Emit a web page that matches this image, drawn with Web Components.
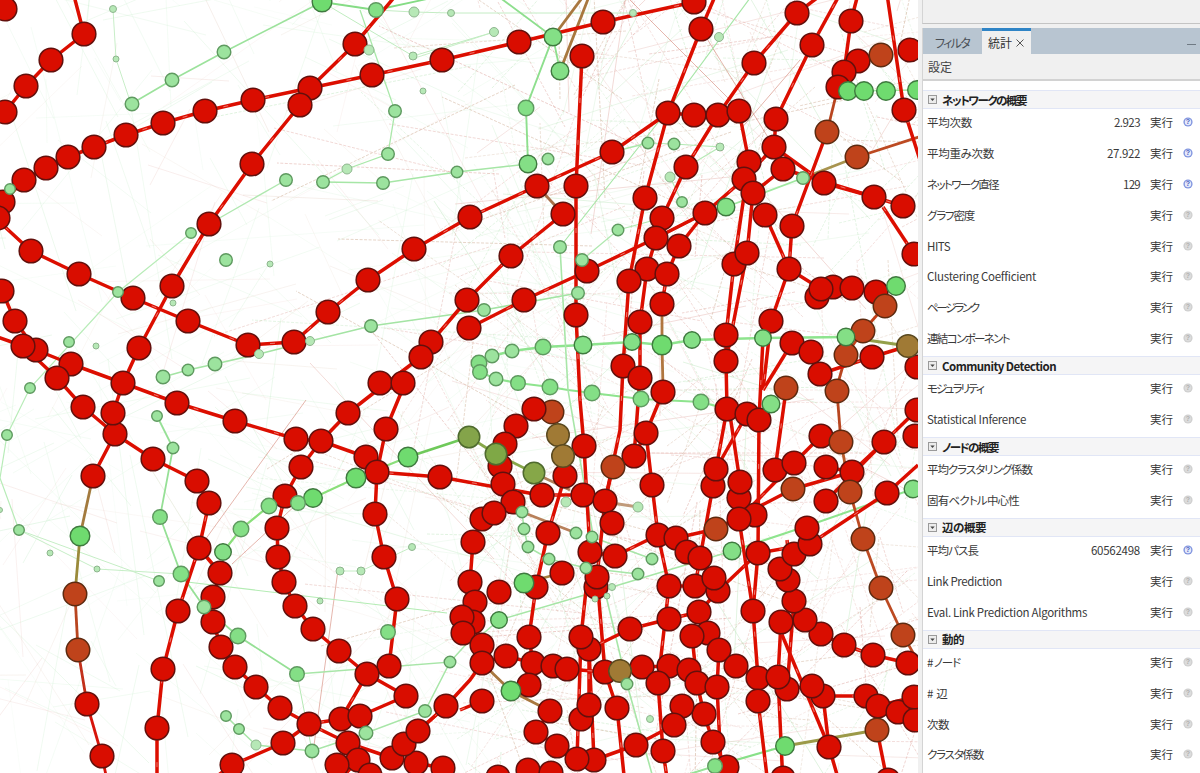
<!DOCTYPE html>
<html lang="ja"><head><meta charset="utf-8"><title>統計</title>
<style>html,body{margin:0;padding:0;background:#fff;overflow:hidden}
gephi-app{font-family:"Noto Sans CJK JP","Noto Sans",sans-serif}</style></head><body>
<gephi-app>
<graph-view slot="graph"></graph-view>
<side-panel slot="panel">
<stat-section title="ネットワークの概要" w="84">
<stat-row label="平均次数" w="45" value="2.923" vw="26" active></stat-row>
<stat-row label="平均重み次数" w="67" value="27.922" vw="33" active></stat-row>
<stat-row label="ネットワーク直径" w="71" value="129" vw="17" active></stat-row>
<stat-row label="グラフ密度" w="47"></stat-row>
<stat-row label="HITS" w="23"></stat-row>
<stat-row label="Clustering Coefficient" w="109"></stat-row>
<stat-row label="ページランク" w="51"></stat-row>
<stat-row label="連結コンポーネント" w="82"></stat-row>
</stat-section>
<stat-section title="Community Detection" w="114">
<stat-row label="モジュラリティ" w="56"></stat-row>
<stat-row label="Statistical Inference" w="99"></stat-row>
</stat-section>
<stat-section title="ノードの概要" w="56">
<stat-row label="平均クラスタリング係数" w="105"></stat-row>
<stat-row label="固有ベクトル中心性" w="92"></stat-row>
</stat-section>
<stat-section title="辺の概要" w="44">
<stat-row label="平均パス長" w="51" value="60562498" vw="49" active></stat-row>
<stat-row label="Link Prediction" w="75"></stat-row>
<stat-row label="Eval. Link Prediction Algorithms" w="160"></stat-row>
</stat-section>
<stat-section title="動的" w="22">
<stat-row label="# ノード" w="33"></stat-row>
<stat-row label="# 辺" w="21"></stat-row>
<stat-row label="次数" w="22"></stat-row>
<stat-row label="クラスタ係数" w="56"></stat-row>
</stat-section>
</side-panel>
</gephi-app>
<script>
function fit(el,w){ if(!w||!el.firstChild)return; el.style.letterSpacing='0px';
 const r=document.createRange();r.selectNodeContents(el);const cur=r.getBoundingClientRect().width;
 const n=el.textContent.length; if(cur>0)el.style.letterSpacing=((+w-cur)/n).toFixed(3)+'px'; }
class GephiApp extends HTMLElement{constructor(){super();this.attachShadow({mode:'open'}).innerHTML=`<style>
:host{display:flex;width:1200px;height:773px;overflow:hidden}
.g{flex:0 0 918px;height:773px;overflow:hidden}
.p{flex:0 0 282px;height:773px;overflow:hidden}
</style><div class="g"><slot name="graph"></slot></div><div class="p"><slot name="panel"></slot></div>`}}

const RED_CHAINS=[
[[73,-8],[84,34],[51,60],[26,86],[5,112],[-8,125]],
[[-5,205],[3,202],[24,180],[46,168],[68,157],[94,147],[126,135],[163,123],[205,111],[253,100],[310,88],[372,75],[442,60],[519,42],[603,22],[694,2],[720,-6]],
[[397,-6],[355,44],[310,88]],
[[300,105],[252,164],[209,224],[172,286],[139,348],[123,383],[113,413],[115,434],[93,476]],
[[5,227],[31,251],[79,274],[133,298],[188,321],[248,345],[294,342],[328,312],[368,280],[414,249],[470,217],[537,186],[612,152],[668,113],[694,115],[718,115],[739,111]],
[[-5,275],[2,291],[15,321],[36,350]],[[-8,335],[23,346],[57,378],[83,407],[115,434],[153,459],[197,481],[209,503],[199,548],[178,611],[163,669],[157,728],[157,785]],
[[36,350],[71,364],[123,383],[177,403],[235,421],[296,439],[321,441],[366,457],[377,472],[440,477],[540,495],[583,495],[605,501]],
[[71,364],[57,378]],
[[321,441],[348,413],[380,388],[421,357],[431,342],[467,300],[511,256],[563,214]],
[[301,467],[321,441]],[[301,467],[285,496],[277,528],[278,557],[284,582],[295,606],[313,629],[339,651],[367,674],[406,696],[360,716],[341,719],[309,724],[280,708],[256,687],[235,667],[221,647],[213,622],[213,597],[220,573],[199,548]],
[[403,388],[386,429],[377,472],[375,514],[384,557],[397,599],[389,666],[367,674],[341,719]],
[[283,743],[232,765],[205,785]],[[283,743],[309,724],[348,743],[392,758],[416,763],[443,768]],
[[418,731],[404,744],[392,758]],[[418,731],[446,706],[470,680],[482,663]],[[404,744],[446,706]],[[348,743],[358,760],[340,780]],[[380,388],[403,388]],
[[469,328],[524,300],[587,271],[656,238],[705,213],[744,179],[774,147]],
[[576,186],[576,315],[580,400],[584,446],[590,552],[581,637],[577,759]],[[582,56],[576,186]],
[[701,29],[668,113],[645,198],[629,281],[623,366],[620,430],[605,501],[597,577]],[[701,29],[716,-6]],
[[718,115],[686,167],[662,218],[647,269],[640,322],[640,378],[634,456]],[[656,238],[662,218]],[[679,246],[705,213]],[[679,246],[667,274],[662,304]],
[[797,13],[754,63],[718,115]],[[797,13],[825,-8]],[[812,45],[776,119],[774,147]],[[812,45],[840,-6]],
[[739,111],[749,162],[734,264],[726,335],[726,361],[727,409],[716,469],[713,486],[695,586]],[[783,169],[753,193],[747,253],[726,361]],
[[774,147],[824,183],[874,197],[903,206]],[[774,147],[783,169],[874,197]],[[883,207],[914,254]],[[887,-6],[904,110],[920,160]],
[[827,132],[792,226],[789,269],[771,321],[763,390]],[[789,269],[821,289],[833,287],[852,288],[876,292]],[[765,215],[789,269]],
[[792,343],[811,352],[820,374],[872,357],[908,346]],[[763,390],[792,343]],[[763,338],[759,420],[758,553],[753,611],[758,678],[758,701],[768,785]],
[[851,21],[844,72],[838,87]],[[851,21],[858,-6]],
[[646,433],[663,392]],[[646,433],[652,485],[658,535],[669,586],[658,683],[663,751],[668,785]],[[634,456],[646,433]],
[[613,467],[605,501],[612,523]],[[565,476],[548,533],[536,587],[529,637],[533,663],[529,685]],
[[473,542],[482,519]],[[473,542],[470,582],[475,602],[473,622]],[[494,513],[513,502]],[[590,552],[615,556],[658,535],[676,538],[716,529],[793,489],[852,472],[884,442],[917,410]],
[[597,577],[605,672],[617,708],[625,785]],[[589,649],[594,760]],[[581,719],[589,705],[589,649],[630,629],[669,619],[699,612],[718,591],[758,553],[810,544],[887,493],[918,465]],
[[482,645],[482,663],[506,656],[533,663],[553,666],[567,669],[605,672],[642,667],[669,666],[689,670],[717,687],[722,785]],
[[460,710],[482,701]],[[550,711],[536,732],[557,746],[577,759],[594,760],[636,745],[674,725],[682,706],[704,714],[713,742],[727,767]],
[[692,636],[697,683],[704,714]],[[708,633],[719,650],[736,666],[758,678]],[[719,650],[717,687]],
[[778,677],[787,689],[812,686],[823,696],[866,696],[878,706],[898,712],[915,720]],[[781,622],[778,677],[783,785]],[[781,622],[805,620],[821,634],[844,645],[873,655],[908,663],[920,666]],
[[823,696],[829,747],[840,785]],[[877,730],[888,785]],[[780,630],[829,747]],[[914,697],[878,706]],
[[794,601],[781,622]],[[794,601],[788,580],[780,569],[794,554],[810,544],[807,528]],[[787,540],[794,601]],[[687,552],[700,558],[718,591]],[[714,578],[695,586],[669,586]],[[687,552],[676,538]],
[[775,470],[786,390]],[[794,463],[739,519]],[[821,436],[794,463]],[[826,467],[852,472]],[[826,501],[884,442]],[[787,689],[794,601]],
[[716,469],[747,414]],[[740,482],[730,415]],[[739,498],[739,519],[753,611]]
];
const THIN_RED=[[[701,29],[774,147]],[[338,570],[312,760]],[[306,400],[205,540]],[[630,0],[740,110]],[[800,60],[740,130]],[[298,503],[232,564]]];
const BROWN=[[[553,37],[585,-6],'#a8783f'],[[560,71],[590,-6],'#a8783f'],[[563,214],[537,186],'#a8704a'],[[662,304],[662,345],'#b0763f'],[[662,345],[663,388],'#b0763f'],[[656,238],[705,213],'#a8723f'],[[93,476],[80,536],'#a37a3e'],[[80,536],[75,594],'#9a8a3a'],[[75,594],[78,650],'#b8451f'],[[78,650],[87,704],'#c2301a'],[[87,704],[102,756],'#d6140a'],[[102,756],[108,785],'#d6140a'],
[[838,87],[827,132],'#b8451f'],[[857,157],[925,135],'#bc4a22'],[[803,178],[857,157],'#a8944f'],[[885,306],[863,331],'#c0401a'],[[863,331],[846,355],'#c0401a'],[[846,337],[908,346],'#93a04a'],[[846,355],[836,390],'#b8451f'],[[837,392],[841,442],'#b8451f'],[[841,442],[850,492],'#b85a2a'],[[850,492],[863,539],'#bc4a22'],[[863,539],[881,588],'#bc4a22'],[[881,588],[903,635],'#bc4a22'],[[903,635],[920,665],'#bc4a22'],[[785,746],[877,730],'#9b9a48'],
[[496,454],[534,473],'#86a748'],[[469,437],[496,454],'#86a748'],[[534,473],[570,490],'#b0805a'],[[482,663],[511,691],'#a8783f'],[[511,691],[550,711],'#a8783f'],[[524,583],[562,573],'#a8803f'],[[612,503],[638,507],'#c09a7a'],[[522,512],[576,533],'#b8805a'],[[408,457],[469,437],'#6fc95a']];
const GREEN_EDGES=[
[[322,2],[224,52],[172,80],[131,104],1.6,'#9ce29c'],[[131,104],[116,59],[113,9],1,'#c8eec8'],[[322,2],[376,10],[450,-6],1.8,'#85dc85'],[[376,10],[414,12],[451,13],[640,13],1,'#c4ecc4'],[[360,10],[395,111],[388,154],[347,169],[323,182],1.3,'#aae8aa'],[[323,182],[383,183],[457,172],[528,164],1.5,'#a6e6a6'],[[286,180],[209,224],1.4,'#b0e8b0'],[[191,233],[118,292],[30,388],[7,435],[0,478],[19,530],1.2,'#b8ecb8'],[[19,530],[159,581],1,'#c6eec6'],[[19,530],[97,569],[181,574],1,'#c6eec6'],
[[157,416],[173,448],[160,517],[181,574],[204,607],[238,636],[297,674],1.8,'#96e096'],[[297,674],[312,751],1,'#b4e8b4'],[[163,377],[188,370],[215,364],[259,354],[310,341],[371,326],[484,310],[578,293],1.7,'#a4e4a4'],[[187,582],[447,613],1.2,'#b4ecb4'],[[297,674],[450,662],[425,711],[366,733],[312,751],[256,745],[239,729],[226,716],1.5,'#a8e6a8'],[[340,571],[361,571],[412,547],1,'#c6eec6'],[[223,552],[241,529],[269,506],[313,498],[356,478],[408,457],2.2,'#8adf7a'],
[[479,363],[492,356],[512,351],[543,347],[583,345],[632,342],[662,345],[692,340],[726,339],[763,338],[846,337],2.4,'#8ee48e'],[[480,372],[496,379],[518,383],[550,387],[568,390],[592,393],[641,399],[701,402],[727,409],2.2,'#8ee48e'],[[560,247],[568,390],[593,535],1.6,'#a8e6a8'],[[592,537],[652,559],1.6,'#a8e6a8'],[[586,568],[638,574],1.6,'#a8e6a8'],[[522,512],[524,529],[528,547],[549,559],[586,568],1.6,'#a8e6a8'],[[470,645],[499,620],[612,587],[732,551],1.5,'#a6e6a6'],[[732,551],[810,525],[913,489],2,'#8ee48e'],[[726,207],[803,178],1.8,'#a0e8a0'],[[648,143],[674,144],[720,147],[670,177],[682,202],1.2,'#b6eab6'],[[612,152],[648,143],1.3,'#aae8aa'],[[618,230],[662,218],1.2,'#b0e8b0'],[[618,230],[582,260],1.3,'#b0e8b0'],[[560,247],[660,120],[753,-6],1.2,'#a8e6a8'],[[528,164],[526,108],[553,37],[495,-6],1.9,'#8edf8e'],[[553,37],[560,71],1.8,'#8edf8e'],[[494,32],[415,58],1,'#c8eec8'],[[322,2],[413,56],[494,32],1,'#c0ecc0'],[[592,537],[627,684],[655,785],1.6,'#a8e6a8'],[[715,766],[785,746],2.2,'#88e088'],[[655,785],[715,766],2,'#98e298'],[[848,91],[917,90],1.6,'#a0e8a0'],[[896,286],[876,292],1.4,'#a0e8a0'],[[450,662],[470,640],1.5,'#a8e6a8']];

const RED_NODES=`552,412:o 5,9 84,34 51,60 26,86 5,112 3,202 -2,218 24,180 46,168 68,157 94,147 126,135 163,123 205,111 253,100 310,88 300,105 372,75 355,44 442,60 519,42 603,22 694,2 252,164 209,224 172,286 139,348 123,383 31,251 79,274 133,298 188,321 248,345 294,342 328,312 368,280 414,249 470,217 537,186 612,152 668,113 694,115 718,115 739,111 2,291 15,321 36,350 23,346 71,364 57,378 83,407 115,434 113,413 93,476 153,459 197,481 209,503 199,548 178,611 163,669 157,728 177,403 235,421 296,439 321,441 348,413 380,383 403,383 386,429 301,467 285,496 277,528 278,557 284,582 295,606 313,629 339,651 389,666 367,674 406,696 397,599 384,557 375,514 366,457 377,472 440,477 87,704 102,756 220,573 213,597 213,622 221,647 235,667 256,687 280,708 309,724 341,719 360,716 283,743 232,765 348,743 358,760 337,765 446,706 431,342 421,357 467,300 469,328 511,256 563,214 576,186 582,56 524,300 587,271 576,315 701,29 797,13 851,21 812,45 754,63 858,61 844,72 838,87 910,50 904,110 776,119 774,147 749,162 783,169 744,179 753,193 765,215 792,226 824,183 874,197 903,206 914,254 705,213 686,167 645,198 662,218 656,238 679,246 647,269 667,274 629,281 662,304 640,322 623,366 640,378 663,392 734,264 747,253 789,269 771,321 817,297 833,287 821,289 852,288 876,292 726,335 726,361 792,343 811,352 820,374 872,357 917,367 727,409 747,414 759,420 534,409 516,426 505,444 500,466 503,484 584,446 565,476 646,433 634,456 652,485 542,495 583,495 605,501 513,502 482,519 494,513 473,542 612,523 548,533 590,552 615,556 658,535 676,538 687,552 700,558 669,586 695,586 718,591 714,578 562,573 536,587 499,592 470,582 475,602 473,622 462,617 463,633 482,645 482,663 506,656 529,637 533,663 553,666 567,669 529,685 482,701 550,711 536,732 557,746 594,760 577,759 581,719 589,705 617,708 589,649 581,637 605,672 642,667 630,629 669,619 699,612 708,633 692,636 669,666 689,670 658,683 697,683 717,687 719,650 736,666 758,678 758,701 787,689 778,677 823,696 812,686 866,696 878,706 898,712 915,720 914,697 829,747 727,767 713,742 704,714 682,706 674,725 663,751 636,745 908,663 873,655 844,645 821,634 805,620 781,622 794,601 788,580 780,569 794,554 810,544 807,528 753,611 758,553 755,515 739,498 740,482 739,519 713,486 716,469 775,470 794,463 826,467 852,472 826,501 821,436 884,442 887,493 915,436 917,410 596,587 597,577 528,770 551,773 498,777 783,778 888,780 370,775 416,763 392,758 404,744 418,731 443,768`;
const OTHER=`881,55:12.5:#bf431b:#5c2a10 827,132:12.5:#bf431b:#5c2a10 857,157:12.5:#bf431b:#5c2a10 885,306:12.5:#bf431b:#5c2a10 863,331:12.5:#bf431b:#5c2a10 846,355:12.5:#bf431b:#5c2a10 786,388:12.5:#bf431b:#5c2a10 837,391:12.5:#bf431b:#5c2a10 841,442:12.5:#bf431b:#5c2a10 850,492:12.5:#bf431b:#5c2a10 793,489:12.5:#bf431b:#5c2a10 863,539:12.5:#bf431b:#5c2a10 881,588:12.5:#bf431b:#5c2a10 903,635:12.5:#bf431b:#5c2a10 877,730:12.5:#bf431b:#5c2a10 75,594:12.5:#bf431b:#5c2a10 78,650:12.5:#bf431b:#5c2a10 613,467:12.5:#bf431b:#5c2a10 716,529:12.5:#bf431b:#5c2a10 558,435:12:#a07a35:#5b4a20 563,456:12:#a07a35:#5b4a20 620,671:12:#a07a35:#5b4a20 908,346:12:#a07a35:#5b4a20 469,437:11.5:#84a44a:#4f6a2e 496,454:11.5:#7fa846:#4f6a2e 534,473:11.5:#86a748:#4f6a2e`;
const GREEN=`80,536:10.5 322,2:10.5 356,478:10.5 408,457:10.5 313,498:10 896,286:10 848,91:10 864,91:10 886,91:10 917,90:10 726,207:9.5 511,691:10.5 524,583:10.5 732,551:9.5 785,746:10 913,489:9.5 846,337:9.5 662,345:10.5 553,37:9.5 560,71:9.5 528,164:9.5 583,345:9.5 376,10:8 132,104:7.5 172,80:7.5 224,52:7.5 369,50:5.5 414,12:5.5 395,111:7 388,154:7 347,169:5.5 323,182:7 383,183:7 457,172:6.5 286,180:7 191,233:6 226,260:7 118,292:6 69,342:6 163,377:7.5 188,370:6.5 215,364:7.5 259,354:5 310,341:5 371,326:7 10,189:6 30,388:6 7,435:6 19,530:6 157,416:6 173,448:6.5 160,517:8 181,574:8.5 204,607:7.5 238,636:8.5 297,674:8 159,581:6 223,552:9 241,529:8.5 269,506:8.5 298,503:8 388,632:8 450,662:6.5 425,711:7 366,733:7.5 312,751:7.5 256,745:5.5 239,729:6 226,716:6 526,108:8.5 548,159:6.5 648,143:6.5 674,144:6.5 670,177:5.5 682,202:6 618,230:6.5 560,247:7 582,260:7 578,293:7 484,310:7 803,178:7 543,347:8.5 512,351:7.5 492,356:7.5 479,363:8.5 480,372:8 496,379:7.5 518,383:8 550,387:8.5 592,393:8.5 641,399:8.5 701,402:8.5 771,404:9.5 632,342:9 692,340:9 763,338:9 522,512:6.5 524,529:6.5 528,547:6.5 549,559:6.5 586,568:6.5 576,533:6.5 592,537:6.5 652,559:6.5 638,574:6.5 566,502:5.5 499,620:9 627,684:6.5 715,766:8 113,9:4 116,59:3.5 413,56:4.5 423,91:3.5 451,13:4 270,264:3.5 173,303:3.5 96,346:3.5 50,553:3.5 97,569:3.5 0,510:3 320,601:3.5 340,571:4.5 361,571:4.5 412,547:4 494,32:5 633,13:4 719,37:5 720,147:4.5 638,507:5.5 612,587:4 607,596:3.5 595,599:3.5 650,719:4`;

class GraphView extends HTMLElement{
 constructor(){super();
  const root=this.attachShadow({mode:'open'});
  let seed=12345;const rnd=()=>{seed=(seed*1103515245+12345)&0x7fffffff;return seed/0x7fffffff};
  const pts=p=>p.filter(a=>Array.isArray(a)).map(a=>a.join(',')).join(' ');
  let s='';
  for(let i=0;i<260;i++){
    const x=rnd()*640+(i%2?0:-40),y=rnd()*773,a=rnd()*Math.PI*2,l=50+rnd()*240;
    s+=`<line x1="${x|0}" y1="${y|0}" x2="${(x+Math.cos(a)*l)|0}" y2="${(y+Math.sin(a)*l)|0}" stroke="#c6edca" stroke-opacity="${(.15+rnd()*.25).toFixed(2)}" stroke-width="${(.6+rnd()*.4).toFixed(1)}"/>`;
  }
  for(let i=0;i<520;i++){
    const right=i%6!==0;
    const x=right?450+rnd()*480:rnd()*460,y=rnd()*773,a=rnd()*Math.PI*2,l=60+rnd()*(right?240:170);
    const c=['#d99a92','#e4b0aa','#c9a58a','#bfe6bf'][i%4];
    s+=`<line x1="${x|0}" y1="${y|0}" x2="${(x+Math.cos(a)*l)|0}" y2="${(y+Math.sin(a)*l)|0}" stroke="${c}" stroke-opacity="${(right?.3+rnd()*.4:.1+rnd()*.15).toFixed(2)}" stroke-width=".7" stroke-dasharray="${i%3?'3 1.5':'none'}"/>`;
  }
  for(const t of THIN_RED)s+=`<polyline fill="none" points="${pts(t)}" stroke="#c96a58" stroke-opacity=".55" stroke-width=".9"/>`;
  for(const e of GREEN_EDGES){const c=e[e.length-1],w=e[e.length-2];s+=`<polyline fill="none" points="${pts(e)}" stroke="${c}" stroke-width="${w}"/>`}
  for(const e of BROWN){s+=`<polyline fill="none" points="${pts(e)}" stroke="${e[2]}" stroke-width="2.8"/>`}
  for(const c of RED_CHAINS)s+=`<polyline fill="none" points="${pts(c)}" stroke="#dc0e00" stroke-width="3.5" stroke-linejoin="round"/><polyline fill="none" points="${pts(c)}" stroke="#ffd0c8" stroke-opacity=".55" stroke-width="1" stroke-dasharray="5 37"/>`;
  const circle=(x,y,r,f,st,w)=>`<circle cx="${x}" cy="${y}" r="${r-w/2}" fill="${f}" stroke="${st}" stroke-width="${w}"/>`;
  for(const n of RED_NODES.split(/\s+/)){
    const [xy,t]=n.split(':');const [x,y]=xy.split(',');
    s+=t?circle(x,y,12.5,'#bf431b','#5c2a10',1.5):circle(x,y,12.6,'#d90d00','#62100c',1.5);
  }
  for(const n of OTHER.split(/\s+/)){const [xy,r,f,st]=n.split(':');const [x,y]=xy.split(',');s+=circle(x,y,+r,f,st,1.5)}
  for(const n of GREEN.split(/\s+/)){
    const [xy,rs]=n.split(':');const [x,y]=xy.split(',');const r=+rs;
    const f=r>=10?'#6fdb6f':r>=8?'#84df86':r>=6?'#9ce39e':'#b6e8b6';
    const st=r>=9?'#3f7a3f':r>=6?'#5f9a60':'#8eb58e';
    s+=circle(x,y,r,f,st,r>=6?1.4:1);
  }
  root.innerHTML=`<style>:host{display:block;width:918px;height:773px;background:#fff;overflow:hidden}svg{display:block;filter:blur(.35px)}</style>
<svg width="918" height="773" viewBox="0 0 918 773" xmlns="http://www.w3.org/2000/svg" aria-label="ネットワークグラフ">${s}</svg>`;
 }
}

class SidePanel extends HTMLElement{constructor(){super();this.attachShadow({mode:'open'}).innerHTML=`<style>
:host{display:flex;flex-direction:column;width:282px;height:773px;box-sizing:border-box;padding-left:4px;background:#f0f0f0;color:#333;font:11.5px/16px "Noto Sans CJK JP","Noto Sans",sans-serif;font-feature-settings:"palt";overflow:hidden}
.top{height:23px;flex:none;border-left:1px solid #d4d4d4;border-bottom:1px solid #c4c4c4;margin-bottom:4px}
.inner{flex:1;display:flex;flex-direction:column;min-height:0;border-left:1px solid #d4d4d4}
.tabs{height:26px;flex:none;background:#b8c5d1;display:flex;align-items:stretch}
.tab{box-sizing:border-box;flex:0 0 59px;display:flex;align-items:center;padding:3px 0 0 12px;color:#4a5056;font-size:12px;white-space:nowrap}
.tab.on{flex:0 0 49px;padding:0 0 0 6px;gap:3px;border-top:3px solid #2f84c6;background:#f0f0f0;color:#333}
.min{margin-left:auto;margin-right:4px;width:9px;height:1px;background:#6f7a84;align-self:center;margin-top:7px}
.x{width:10px;height:10px;flex:none}
.tool{height:25px;flex:none;display:flex;align-items:center;padding-left:5px;border-bottom:2px solid #d2d2d2;font-size:12px;color:#444}
.body{flex:1;background:#fff;padding-top:9px;overflow:hidden}
</style>
<div class="top"></div>
<div class="inner">
<div class="tabs"><div class="tab"><span id="f">フィルタ</span></div><div class="tab on"><span>統計</span><svg class="x" viewBox="0 0 10 10"><path d="M1.5 1.5l7 7M8.5 1.5l-7 7" stroke="#555" stroke-width="1" fill="none"/></svg></div><div class="min"></div></div>
<div class="tool">設定</div>
<div class="body"><slot></slot></div>
</div>`}
 connectedCallback(){fit(this.shadowRoot.getElementById('f'),34)}
}

class StatSection extends HTMLElement{
 constructor(){super();this.attachShadow({mode:'open'}).innerHTML=`<style>
:host{display:block}
.h{box-sizing:border-box;height:19.2px;display:flex;align-items:center;gap:5px;padding-left:5px;background:#f5f5f6;border-top:1px solid #e1e6f6;border-bottom:1px solid #e1e6f6;font-weight:700;color:#222;font-size:11.5px}
.box{width:9px;height:9px;flex:none;display:block}
span{white-space:nowrap}
</style><div class="h"><svg class="box" viewBox="0 0 9 9"><rect x=".5" y=".5" width="8" height="8" fill="#ececec" stroke="#9a9a9a"/><path d="M2.3 3.4h4.4L4.5 6z" fill="#444"/></svg><span id="t"></span></div><slot></slot>`}
 connectedCallback(){const t=this.shadowRoot.getElementById('t');t.textContent=this.getAttribute('title')||'';fit(t,this.getAttribute('w'))}
}
class StatRow extends HTMLElement{
 constructor(){super();this.attachShadow({mode:'open'}).innerHTML=`<style>
:host{display:block;height:30.86px}
.r{box-sizing:border-box;height:26px;padding-right:7.5px;display:flex;align-items:center;color:#3a3a3a;font-size:11.5px}
.l{padding-left:4px;flex:1;white-space:nowrap}
.v{width:90px;text-align:right;white-space:nowrap}
.b{margin-left:10px;width:23px;white-space:nowrap;font-feature-settings:normal}
.i{width:10px;height:10px;margin-left:9.5px;flex:none;display:block}
text{font:700 7px "Liberation Sans",sans-serif}
</style><div class="r"><span class="l" id="l"></span><span class="v" id="v"></span><span class="b">実行</span><svg class="i" viewBox="0 0 10 10"><circle id="c" cx="5" cy="5" r="4.6"/><circle id="d" cx="5" cy="5" r="3.2"/><text id="q" x="5" y="7.4" text-anchor="middle">?</text></svg></div>`}
 connectedCallback(){const s=this.shadowRoot,a=this.hasAttribute('active');
  const l=s.getElementById('l'),v=s.getElementById('v');
  l.textContent=this.getAttribute('label')||'';
  v.textContent=this.getAttribute('value')||'';
  fit(l,this.getAttribute('w'));fit(v,this.getAttribute('vw'));
  s.getElementById('c').setAttribute('fill',a?'#8296e0':'#d0d0d0');
  s.getElementById('d').setAttribute('fill',a?'#e6eafa':'#dcdcdc');
  s.getElementById('q').setAttribute('fill',a?'#4a5fc0':'#b0b0b0');}
}
customElements.define('gephi-app',GephiApp);
customElements.define('graph-view',GraphView);
customElements.define('side-panel',SidePanel);
customElements.define('stat-section',StatSection);
customElements.define('stat-row',StatRow);
</script>
</body></html>
